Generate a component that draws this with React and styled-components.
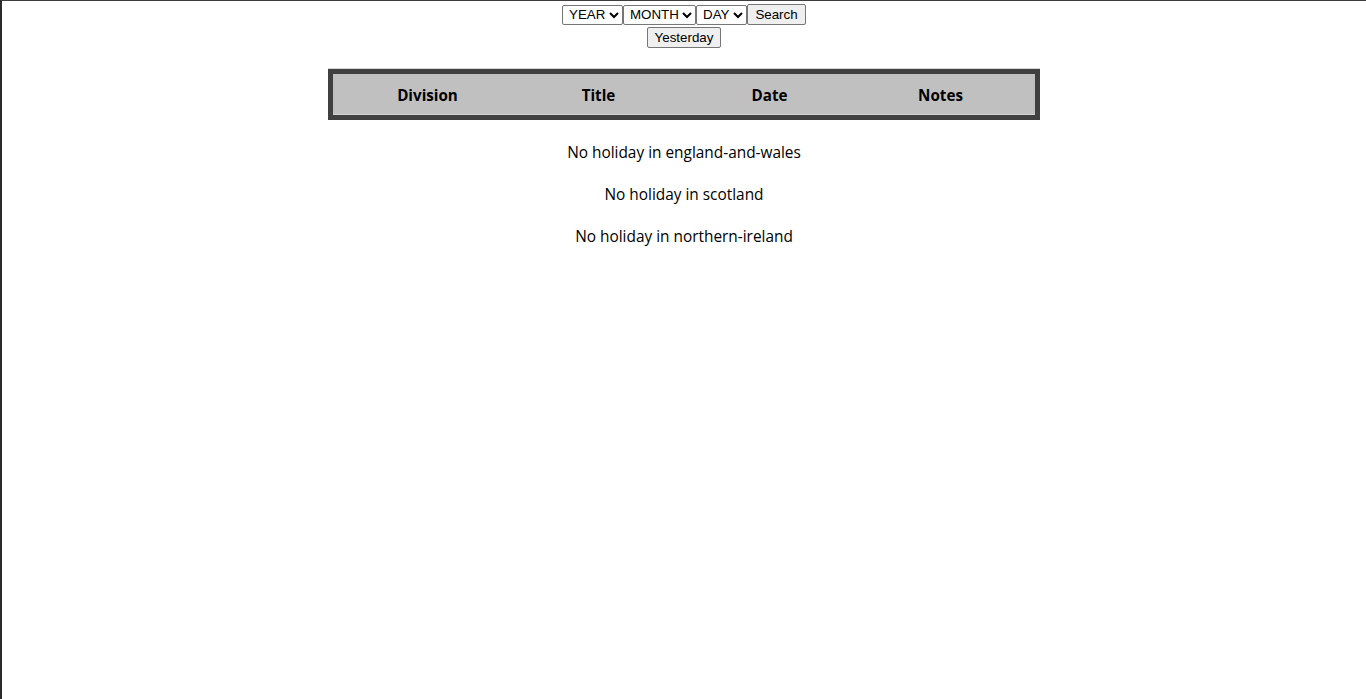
import React from 'react';
import styled, { createGlobalStyle } from 'styled-components';

const GlobalStyle = createGlobalStyle`
    html, body {
        margin: 0;
        padding: 0;
        background: #fff;
    }
    body {
        font-family: "Open Sans", "Noto Sans", sans-serif;
        color: #000;
    }
`;

const Frame = styled.div`
    min-height: 100vh;
    box-sizing: border-box;
    border-top: 1px solid #3c3c3c;
    border-left: 2px solid #2b2b2b;
    padding-top: 3px;
`;

const Controls = styled.div`
    display: flex;
    justify-content: center;
    align-items: center;
`;

const Select = styled.select`
    box-sizing: border-box;
    height: 20px;
    width: ${props => props.w}px;
    margin: 0;
    padding: 0 0 0 2px;
    font-family: "Liberation Sans", Arial, sans-serif;
    font-size: 13.33px;
    color: #000;
    background: #fff;
    border: 1px solid #767676;
    border-radius: 2px;
`;

const Button = styled.button`
    box-sizing: border-box;
    height: ${props => props.h || 21}px;
    width: ${props => props.w}px;
    margin: 0;
    padding: 0;
    font-family: "Liberation Sans", Arial, sans-serif;
    font-size: 13.33px;
    color: #000;
    background: #efefef;
    border: 1px solid #767676;
    border-radius: 2px;
`;

const YesterdayRow = styled(Controls)`
    margin-top: 2px;
`;

const Table = styled.div`
    box-sizing: border-box;
    width: 712px;
    margin: 21px auto 0;
    border: 5px solid #404040;
    background: #c0c0c0;
    box-shadow: 0 -1px 0 #d4d4d4;
`;

const HeadRow = styled.div`
    box-sizing: border-box;
    display: grid;
    grid-template-columns: repeat(4, 1fr);
    padding: 2px 9px 0;
    height: 41px;
    align-items: center;
    border-bottom: 1px solid #d2d2d2;
`;

const HeadCell = styled.div`
    text-align: center;
    font-weight: 700;
    font-size: 15.2px;
`;

const Messages = styled.div`
    padding-top: 1px;
`;

const Message = styled.div`
    text-align: center;
    font-size: 15.4px;
    line-height: 21px;
    margin-top: 21px;
`;

const divisions = ['england-and-wales', 'scotland', 'northern-ireland'];

const App = () => {
    return <Frame>
        <GlobalStyle />
        <Controls>
            <Select w={61}><option>YEAR</option></Select>
            <Select w={73}><option>MONTH</option></Select>
            <Select w={51}><option>DAY</option></Select>
            <Button w={59}>Search</Button>
        </Controls>
        <YesterdayRow>
            <Button w={74}>Yesterday</Button>
        </YesterdayRow>
        <Table>
            <HeadRow>
                <HeadCell>Division</HeadCell>
                <HeadCell>Title</HeadCell>
                <HeadCell>Date</HeadCell>
                <HeadCell>Notes</HeadCell>
            </HeadRow>
        </Table>
        <Messages>
            {divisions.map(d => <Message key={d}>No holiday in {d}</Message>)}
        </Messages>
    </Frame>
}

export default App;
